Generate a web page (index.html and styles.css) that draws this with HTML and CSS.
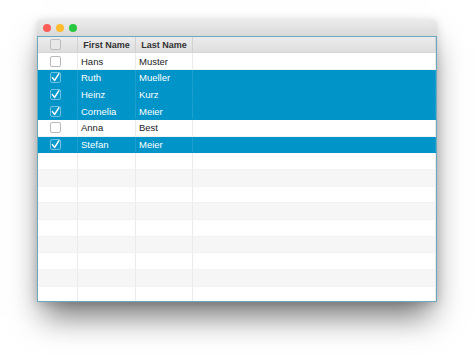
FILE: index.html
```html
<!DOCTYPE html>
<html lang="en">

<head>
    <meta charset="UTF-8">
    <title>Table View</title>
    <link rel="stylesheet" href="styles.css">
</head>

<body>

    <div class="window">
        <div class="titlebar">
            <span class="light red"></span>
            <span class="light yellow"></span>
            <span class="light green"></span>
        </div>

        <div class="table">
            <div class="row header">
                <div class="cell check"><span class="box disabled"></span></div>
                <div class="cell">First Name</div>
                <div class="cell">Last Name</div>
                <div class="cell"></div>
            </div>
            <div id="rows"></div>
        </div>
    </div>

    <script>
        const people = [
            { checked: false, first: 'Hans', last: 'Muster' },
            { checked: true, first: 'Ruth', last: 'Mueller' },
            { checked: true, first: 'Heinz', last: 'Kurz' },
            { checked: true, first: 'Cornelia', last: 'Meier' },
            { checked: false, first: 'Anna', last: 'Best' },
            { checked: true, first: 'Stefan', last: 'Meier' }
        ];

        const tick = '<svg width="11" height="11" viewBox="0 0 11 11"><path d="M2.4 5.6 L4.6 8.4 L8.8 1.8" fill="none" stroke="#fff" stroke-width="1.5" stroke-linecap="round" stroke-linejoin="round"/></svg>';

        const container = document.getElementById('rows');

        // 15 rows fill the table, the empty ones just alternate
        for (let i = 0; i < 15; i++) {
            const person = people[i];
            const row = document.createElement('div');
            row.classList.add('row');
            if (i % 2 === 1) row.classList.add('odd');

            if (person) {
                if (person.checked) row.classList.add('selected');
                row.innerHTML = `
                    <div class="cell check"><span class="box ${person.checked ? 'on' : ''}">${person.checked ? tick : ''}</span></div>
                    <div class="cell">${person.first}</div>
                    <div class="cell">${person.last}</div>
                    <div class="cell"></div>
                `;
            } else {
                row.innerHTML = '<div class="cell"></div><div class="cell"></div><div class="cell"></div><div class="cell"></div>';
            }

            container.appendChild(row);
        }
    </script>
</body>

</html>
```

FILE: styles.css
```css
body {
    margin: 0;
    padding: 19px 0 0 37px;
    min-height: 355px;
    box-sizing: border-box;
    background: #fff;
    font-family: "Liberation Sans", Arial, sans-serif;
}

.window {
    width: 400px;
    border-radius: 4px 4px 0 0;
    box-shadow: 0 20px 30px -6px rgba(0, 0, 0, 0.55), 0 2px 10px rgba(0, 0, 0, 0.15);
    background: #fff;
}

.titlebar {
    height: 17px;
    display: flex;
    align-items: center;
    gap: 5px;
    padding-left: 6px;
    border-radius: 4px 4px 0 0;
    background: linear-gradient(#ececec, #d9d9d9);
}

.light {
    width: 8px;
    height: 8px;
    border-radius: 50%;
}

.red {
    background: #fc5e57;
}

.yellow {
    background: #fdbc2e;
}

.green {
    background: #2ac840;
}

.table {
    height: 264px;
    border: 1px solid #6aa8bd;
    overflow: hidden;
    background: #fff;
}

.row {
    display: grid;
    grid-template-columns: 40px 58px 57px 1fr;
    height: 16.67px;
    box-sizing: border-box;
    border-bottom: 1px solid #f2f2f2;
    font-size: 9.5px;
    color: #222;
    background: #fff;
}

.row.odd {
    background: #f6f6f6;
}

.row.selected {
    background: #0094c8;
    border-bottom-color: #0094c8;
    color: #fff;
}

.cell {
    display: flex;
    align-items: center;
    padding-left: 3px;
    border-right: 1px solid #ebebeb;
    white-space: nowrap;
    overflow: hidden;
}

.selected .cell {
    border-right-color: #1a9fcf;
}

.cell.check {
    padding-left: 12px;
}

.header {
    height: 16.33px;
    border-bottom: 1px solid #d4d4d4;
    font-size: 9px;
    font-weight: bold;
    color: #333;
    background: linear-gradient(#ececec, #dedede);
}

.header .cell {
    justify-content: center;
    padding-left: 0;
    border-right-color: #d2d2d2;
}

.header .cell.check {
    justify-content: flex-start;
    padding-left: 12px;
}

.box {
    flex: none;
    width: 11px;
    height: 11px;
    box-sizing: border-box;
    border: 1px solid #b9b9b9;
    border-radius: 2px;
    background: #fff;
    display: flex;
    align-items: center;
    justify-content: center;
}

.box svg {
    margin: -1px;
}

.box.disabled {
    background: #e8e8e8;
    border-color: #bcbcbc;
}

.box.on {
    background: #0a98cb;
    border-color: #6cc1e2;
}
```
